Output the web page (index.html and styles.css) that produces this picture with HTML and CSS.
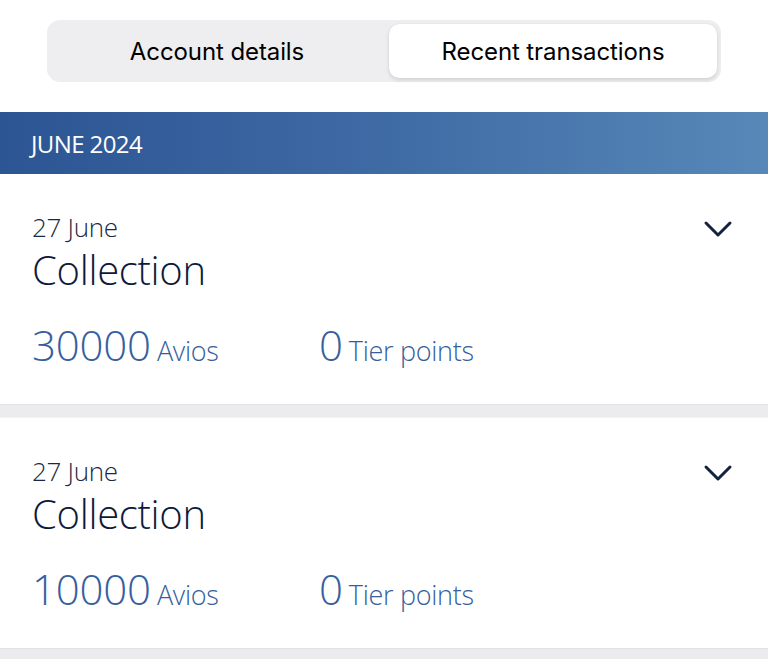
FILE: index.html
```html
<!DOCTYPE html>
<html>
<head>
<meta charset="utf-8">
<link rel="stylesheet" href="styles.css">
</head>
<body>
<div class="page">
  <div class="seg-wrap">
    <div class="seg">
      <div class="seg-item">Account details</div>
      <div class="seg-item active">Recent transactions</div>
    </div>
  </div>
  <div class="month">JUNE 2024</div>
  <div class="card">
    <div class="card-top">
      <div>
        <div class="date">27 June</div>
        <div class="title">Collection</div>
      </div>
      <svg class="chev" width="30" height="20" viewBox="0 0 30 20"><path d="M3 3 L15 15 L27 3" fill="none" stroke="#14213f" stroke-width="3" stroke-linecap="round" stroke-linejoin="round"/></svg>
    </div>
    <div class="points">
      <div class="pt avios"><span class="num">30000</span><span class="unit">Avios</span></div>
      <div class="pt"><span class="num">0</span><span class="unit">Tier points</span></div>
    </div>
  </div>
  <div class="sep"></div>
  <div class="card">
    <div class="card-top">
      <div>
        <div class="date">27 June</div>
        <div class="title">Collection</div>
      </div>
      <svg class="chev" width="30" height="20" viewBox="0 0 30 20"><path d="M3 3 L15 15 L27 3" fill="none" stroke="#14213f" stroke-width="3" stroke-linecap="round" stroke-linejoin="round"/></svg>
    </div>
    <div class="points">
      <div class="pt avios"><span class="num">10000</span><span class="unit">Avios</span></div>
      <div class="pt"><span class="num">0</span><span class="unit">Tier points</span></div>
    </div>
  </div>
  <div class="sep"></div>
</div>
</body>
</html>
```

FILE: styles.css
```css
* { box-sizing: border-box; }
html, body { margin: 0; padding: 0; background: #fff; }
body { width: 768px; height: 659px; overflow: hidden; }
.page { display: flex; flex-direction: column; }
.seg-wrap { padding: 20px 47px 30px 47px; }
.seg {
  display: flex;
  height: 62px;
  background: #eeeef0;
  border-radius: 13px;
  padding: 4px;
}
.seg-item {
  flex: 1;
  display: flex;
  align-items: center;
  justify-content: center;
  font-family: Inter, Roboto, sans-serif;
  font-size: 24px;
  font-weight: 400;
  color: #000;
  border-radius: 10px;
  letter-spacing: -0.1px;
}
.seg-item.active {
  flex: 0 0 328px;
  margin-left: 6px;
  background: #fff;
  box-shadow: 0 2px 4px rgba(0,0,0,0.12), 0 0 1px rgba(0,0,0,0.1);
}
.month {
  height: 62px;
  background: linear-gradient(90deg, #2c5593 0%, #3d68a3 45%, #5788b8 100%);
  color: #fff;
  font-family: "Open Sans", sans-serif;
  font-size: 24px;
  font-weight: 400;
  padding-left: 31px;
  display: flex;
  align-items: center;
  letter-spacing: -0.6px;
}
.card { height: 230px; padding: 38px 35px 0 32px; font-family: "Open Sans", sans-serif; }
.card-top { display: flex; justify-content: space-between; align-items: flex-start; }
.chev { margin-top: 8px; }
.date { font-size: 26px; font-weight: 300; color: #1c2744; letter-spacing: -0.3px; line-height: 31px; }
.title { font-size: 40px; font-weight: 300; color: #0e1a3a; letter-spacing: -0.3px; line-height: 50px; margin-top: 2px; }
.points { display: flex; margin-top: 21px; color: #36609d; align-items: baseline; }
.pt { display: flex; align-items: baseline; }
.pt.avios { width: 287px; }
.num { font-size: 42px; font-weight: 300; letter-spacing: -0.2px; }
.unit { font-size: 27px; font-weight: 300; margin-left: 6px; letter-spacing: -0.3px; }
.sep { height: 14px; background: #ececee; border-top: 1px solid #e2e2e4; border-bottom: 1px solid #f2f2f3; }
```
